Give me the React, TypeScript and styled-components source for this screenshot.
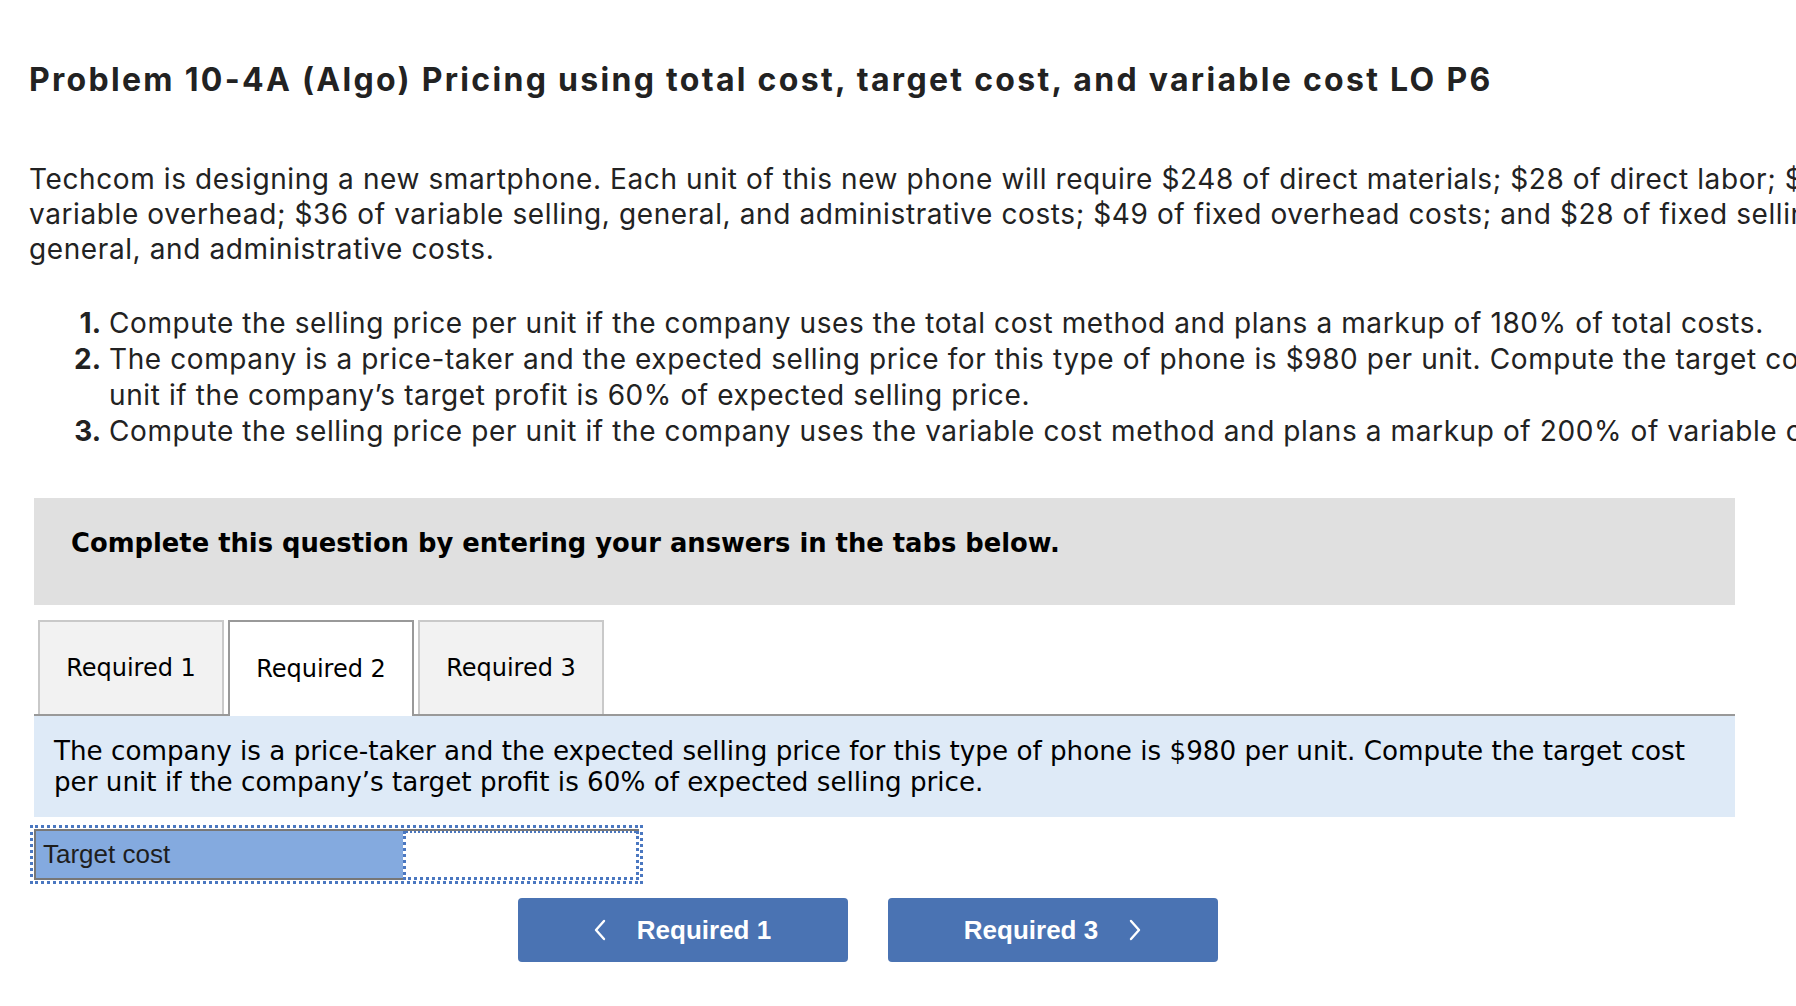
import * as React from "react";
import styled, { createGlobalStyle } from "styled-components";

const GlobalStyle = createGlobalStyle`
  html, body {
    margin: 0;
    padding: 0;
    background: #ffffff;
    overflow: hidden;
  }
  body {
    font-family: Inter, Lato, sans-serif;
    color: #222222;
  }
`;

const Page = styled.div`
  width: 1796px;
  padding-top: 60px;
`;

const Intro = styled.section`
  padding-left: 29px;
`;

const Title = styled.h1`
  margin: 0;
  font-family: Inter, sans-serif;
  font-weight: 700;
  font-size: 32px;
  line-height: 40px;
  letter-spacing: 2.3px;
  color: #222222;
  white-space: nowrap;
`;

const Lead = styled.p`
  margin: 62px 0 0 0;
  font-size: 28px;
  line-height: 35px;
  letter-spacing: 0.6px;
  white-space: nowrap;
`;

const Steps = styled.ol`
  list-style: none;
  margin: 38px 0 0 0;
  padding: 0;
`;

const Step = styled.li`
  display: grid;
  grid-template-columns: 72px auto;
  column-gap: 8px;
  font-size: 28px;
  line-height: 36px;
  letter-spacing: 0.6px;
  white-space: nowrap;
`;

const StepNo = styled.span`
  font-weight: 700;
  text-align: right;
  letter-spacing: 0;
`;

const Panel = styled.section`
  margin: 49px 0 0 34px;
  width: 1701px;
  font-family: "DejaVu Sans", Verdana, sans-serif;
  color: #000000;
`;

const Notice = styled.div`
  height: 107px;
  box-sizing: border-box;
  padding: 30px 0 0 37px;
  background: #e0e0e0;
  font-weight: 700;
  font-size: 25.8px;
  line-height: 30px;
  white-space: nowrap;
`;

const TabBar = styled.div`
  display: flex;
  gap: 4px;
  margin-top: 15px;
  padding-left: 4px;
  border-bottom: 2px solid #999999;
  height: 94px;
`;

const Tab = styled.button<{ $active?: boolean }>`
  width: 186px;
  height: ${(p) => (p.$active ? "96px" : "94px")};
  box-sizing: border-box;
  margin: 0;
  padding: 0;
  border: 2px solid ${(p) => (p.$active ? "#999999" : "#c9c9c9")};
  border-bottom: 0;
  background: ${(p) => (p.$active ? "#ffffff" : "#f2f2f2")};
  font-family: "DejaVu Sans", Verdana, sans-serif;
  font-size: 24px;
  color: #000000;
  cursor: pointer;
  position: relative;
  z-index: 1;
`;

const Prompt = styled.div`
  height: 101px;
  box-sizing: border-box;
  padding: 20px 20px 0 20px;
  background: #deeaf7;
  font-size: 26.2px;
  line-height: 31px;
  white-space: nowrap;
`;

const AnswerRow = styled.div`
  display: flex;
  width: 605px;
  height: 51px;
  margin-top: 12px;
  box-sizing: border-box;
  border-top: 2px solid #777777;
  outline: 3px dotted #4a77c0;
  outline-offset: 1px;
`;

const AnswerLabel = styled.div`
  width: 369px;
  box-sizing: border-box;
  padding-left: 7px;
  display: flex;
  align-items: center;
  background: #84aadf;
  border-left: 2px solid #777777;
  border-bottom: 2px solid #777777;
  font-family: "Liberation Sans", Arial, sans-serif;
  font-size: 26px;
  color: #1e1e1e;
`;

const AnswerInput = styled.input`
  flex: 1;
  min-width: 0;
  margin: 0;
  padding: 0 6px;
  box-sizing: border-box;
  border: 3px dotted #4a77c0;
  border-top-width: 2px;
  background: #ffffff;
  font-family: "Liberation Sans", Arial, sans-serif;
  font-size: 24px;
  outline: none;
`;

const NavBar = styled.div`
  display: flex;
  justify-content: center;
  gap: 40px;
  width: 1735px;
  margin-top: 18px;
`;

const NavButton = styled.button`
  width: 330px;
  height: 64px;
  display: flex;
  align-items: center;
  justify-content: center;
  gap: 31px;
  border: none;
  border-radius: 4px;
  background: #4a73b3;
  color: #ffffff;
  font-family: "Liberation Sans", Arial, sans-serif;
  font-weight: 700;
  font-size: 26px;
  cursor: pointer;
`;

const Chevron = ({ dir }: { dir: "left" | "right" }) => (
  <svg width="12" height="22" viewBox="0 0 12 22" fill="none">
    <polyline
      points={dir === "left" ? "10,2 2,11 10,20" : "2,2 10,11 2,20"}
      stroke="#ffffff"
      strokeWidth="2.4"
      strokeLinecap="round"
      strokeLinejoin="round"
    />
  </svg>
);

const App: React.FC = () => {
  const [value, setValue] = React.useState("");

  return (
    <Page>
      <GlobalStyle />
      <Intro>
        <Title>
          Problem 10-4A (Algo) Pricing using total cost, target cost, and
          variable cost LO P6
        </Title>
        <Lead>
          Techcom is designing a new smartphone. Each unit of this new phone
          will require $248 of direct materials; $28 of direct labor; $40 of
          <br />
          variable overhead; $36 of variable selling, general, and
          administrative costs; $49 of fixed overhead costs; and $28 of fixed
          selling,
          <br />
          general, and administrative costs.
        </Lead>
        <Steps>
          <Step>
            <StepNo>1.</StepNo>
            <span>
              Compute the selling price per unit if the company uses the total
              cost method and plans a markup of 180% of total costs.
            </span>
          </Step>
          <Step>
            <StepNo>2.</StepNo>
            <span>
              The company is a price-taker and the expected selling price for
              this type of phone is $980 per unit. Compute the target cost per
              <br />
              unit if the company’s target profit is 60% of expected selling
              price.
            </span>
          </Step>
          <Step>
            <StepNo>3.</StepNo>
            <span>
              Compute the selling price per unit if the company uses the
              variable cost method and plans a markup of 200% of variable costs.
            </span>
          </Step>
        </Steps>
      </Intro>

      <Panel>
        <Notice>
          Complete this question by entering your answers in the tabs below.
        </Notice>
        <TabBar>
          <Tab>Required 1</Tab>
          <Tab $active>Required 2</Tab>
          <Tab>Required 3</Tab>
        </TabBar>
        <Prompt>
          The company is a price-taker and the expected selling price for this
          type of phone is $980 per unit. Compute the target cost
          <br />
          per unit if the company’s target profit is 60% of expected selling
          price.
        </Prompt>
        <AnswerRow>
          <AnswerLabel>Target cost</AnswerLabel>
          <AnswerInput
            value={value}
            onChange={(e) => setValue(e.target.value)}
          />
        </AnswerRow>
      </Panel>

      <NavBar>
        <NavButton>
          <Chevron dir="left" />
          Required 1
        </NavButton>
        <NavButton>
          Required 3
          <Chevron dir="right" />
        </NavButton>
      </NavBar>
    </Page>
  );
};

export default App;
